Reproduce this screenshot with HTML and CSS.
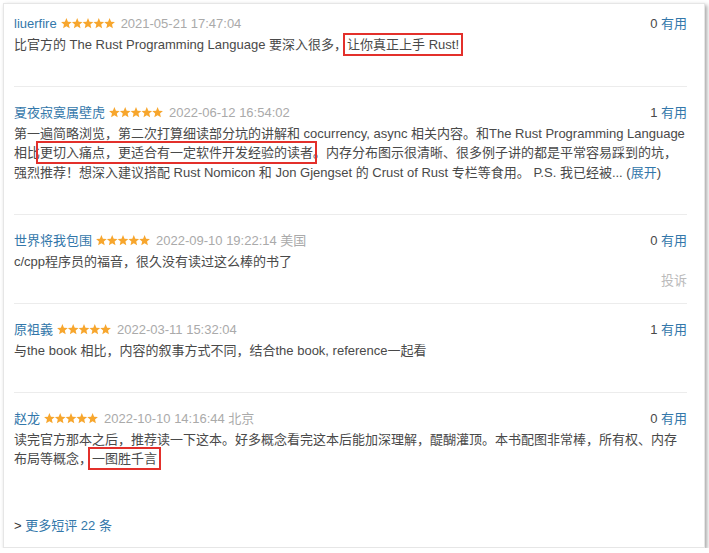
FILE: index.html
```html
<!DOCTYPE html>
<html lang="zh-CN">
<head>
<meta charset="utf-8">
<link rel="stylesheet" href="styles.css">
</head>
<body>
<div class="card">
  <ul class="comments">
    <li class="item">
      <div class="head">
        <div class="meta">
          <a class="name" href="#">liuerfire</a>
          <svg class="stars" viewBox="0 0 55 11" width="54" height="11"><use href="#s" x="0"/><use href="#s" x="11"/><use href="#s" x="22"/><use href="#s" x="33"/><use href="#s" x="44"/></svg>
          <span class="time">2021-05-21 17:47:04</span>
        </div>
        <div class="vote"><span class="count">0</span> <a href="#">有用</a></div>
      </div>
      <p class="text">比官方的 The Rust Programming Language 要深入很多，<span class="mark">让你真正上手 Rust!</span></p>
      <div class="actions"></div>
    </li>
    <li class="item">
      <div class="head">
        <div class="meta">
          <a class="name" href="#">夏夜寂寞属壁虎</a>
          <svg class="stars" viewBox="0 0 55 11" width="54" height="11"><use href="#s" x="0"/><use href="#s" x="11"/><use href="#s" x="22"/><use href="#s" x="33"/><use href="#s" x="44"/></svg>
          <span class="time">2022-06-12 16:54:02</span>
        </div>
        <div class="vote"><span class="count">1</span> <a href="#">有用</a></div>
      </div>
      <p class="text">第一遍简略浏览，第二次打算细读部分坑的讲解和 cocurrency, async 相关内容。和The Rust Programming Language 相比<span class="mark">更切入痛点，更适合有一定软件开发经验的读者</span>。内存分布图示很清晰、很多例子讲的都是平常容易踩到的坑，强烈推荐！想深入建议搭配 Rust Nomicon 和 Jon Gjengset 的 Crust of Rust 专栏等食用。 P.S. 我已经被... (<a href="#">展开</a>)</p>
      <div class="actions"></div>
    </li>
    <li class="item">
      <div class="head">
        <div class="meta">
          <a class="name" href="#">世界将我包围</a>
          <svg class="stars" viewBox="0 0 55 11" width="54" height="11"><use href="#s" x="0"/><use href="#s" x="11"/><use href="#s" x="22"/><use href="#s" x="33"/><use href="#s" x="44"/></svg>
          <span class="time">2022-09-10 19:22:14 美国</span>
        </div>
        <div class="vote"><span class="count">0</span> <a href="#">有用</a></div>
      </div>
      <p class="text">c/cpp程序员的福音，很久没有读过这么棒的书了</p>
      <div class="actions"><a class="report" href="#">投诉</a></div>
    </li>
    <li class="item">
      <div class="head">
        <div class="meta">
          <a class="name" href="#">原祖義</a>
          <svg class="stars" viewBox="0 0 55 11" width="54" height="11"><use href="#s" x="0"/><use href="#s" x="11"/><use href="#s" x="22"/><use href="#s" x="33"/><use href="#s" x="44"/></svg>
          <span class="time">2022-03-11 15:32:04</span>
        </div>
        <div class="vote"><span class="count">1</span> <a href="#">有用</a></div>
      </div>
      <p class="text">与the book 相比，内容的叙事方式不同，结合the book, reference一起看</p>
      <div class="actions"></div>
    </li>
    <li class="item last">
      <div class="head">
        <div class="meta">
          <a class="name" href="#">赵龙</a>
          <svg class="stars" viewBox="0 0 55 11" width="54" height="11"><use href="#s" x="0"/><use href="#s" x="11"/><use href="#s" x="22"/><use href="#s" x="33"/><use href="#s" x="44"/></svg>
          <span class="time">2022-10-10 14:16:44 北京</span>
        </div>
        <div class="vote"><span class="count">0</span> <a href="#">有用</a></div>
      </div>
      <p class="text">读完官方那本之后，推荐读一下这本。好多概念看完这本后能加深理解，醍醐灌顶。本书配图非常棒，所有权、内存布局等概念，<span class="mark">一图胜千言</span></p>
      <div class="actions"></div>
    </li>
  </ul>
  <p class="more"><span class="arrow">&gt;</span> <a href="#">更多短评 22 条</a></p>
</div>
<svg width="0" height="0" class="defs">
  <defs>
    <polygon id="s" points="5.5,0 7.03,3.6 10.92,3.94 7.97,6.5 8.85,10.31 5.5,8.3 2.15,10.31 3.03,6.5 0.08,3.94 3.97,3.6"/>
  </defs>
</svg>
</body>
</html>
```
FILE: styles.css
```css
html, body {
  margin: 0;
  padding: 0;
  background: #fff;
}
body {
  font-family: "Liberation Sans", Arial, "Noto Sans CJK SC", sans-serif;
  font-size: 13px;
  color: #494949;
  padding: 3px 0 0 3px;
}
a {
  color: #3377aa;
  text-decoration: none;
}
.card {
  box-sizing: border-box;
  width: 702px;
  height: 545px;
  border: 1px solid #e6e6e6;
  box-shadow: 2px 2px 4px rgba(0, 0, 0, 0.35);
  padding: 10px 17px 0 10px;
  background: #fff;
}
.comments {
  list-style: none;
  margin: 0;
  padding: 0;
}
.item {
  padding: 16px 0 12px;
  border-bottom: 1px solid #ececec;
}
.item:first-child {
  padding-top: 0;
}
.item.last {
  border-bottom: none;
}
.head {
  display: flex;
  justify-content: space-between;
  line-height: 19.5px;
  height: 19.5px;
}
.meta {
  display: flex;
  align-items: center;
}
.name {
  margin-right: 4px;
}
.stars {
  fill: #f7a62d;
  margin-right: 6px;
  margin-top: -1px;
}
.time {
  color: #aaa;
  font-size: 13px;
}
.vote .count {
  color: #494949;
}
.text {
  margin: 1px 0 0;
  line-height: 19.5px;
}
.mark {
  outline: 2px solid #e3302b;
  outline-offset: 2px;
}
.actions {
  height: 20px;
  line-height: 20px;
  text-align: right;
}
.report {
  color: #bbb;
}
.more {
  margin: 15px 0 0;
  line-height: 20px;
}
.arrow {
  color: #333;
}
.defs {
  position: absolute;
}
```
